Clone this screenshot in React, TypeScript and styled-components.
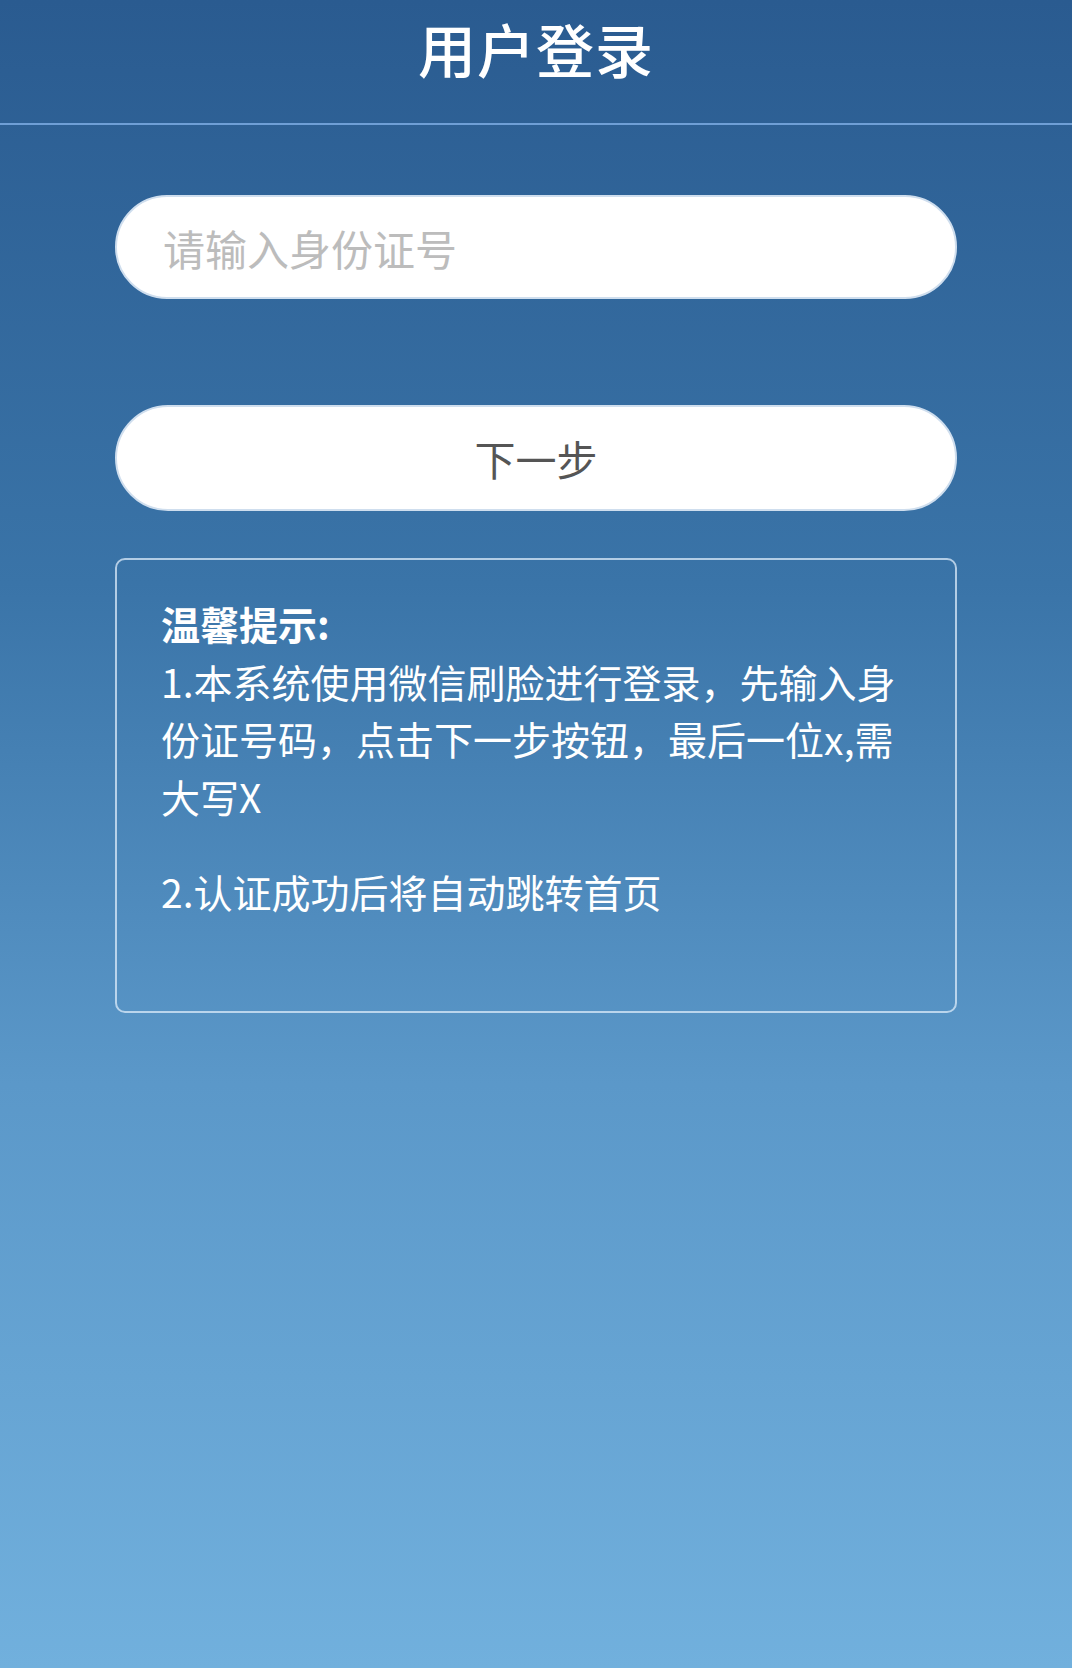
import React from "react";
import styled, { createGlobalStyle } from "styled-components";

const Global = createGlobalStyle`
  html, body { margin: 0; padding: 0; }
  body {
    font-family: "Noto Sans CJK SC", "Noto Sans", sans-serif;
    background: #2a5c91;
  }
  * { box-sizing: border-box; }
`;

const Page = styled.div`
  min-height: 1668px;
  background: linear-gradient(180deg, #2a5b90 0%, #3a74a8 35%, #5b98c9 65%, #71b0dd 100%);
  display: flex;
  flex-direction: column;
`;

const Header = styled.header`
  height: 125px;
  border-bottom: 2px solid #6f9fd6;
  display: flex;
  justify-content: center;
  padding-top: 11px;
`;

const Title = styled.h1`
  margin: 0;
  color: #ffffff;
  font-size: 58px;
  font-weight: 500;
  line-height: 74px;
  letter-spacing: 1px;
`;

const Main = styled.main`
  padding: 70px 115px 0;
  display: flex;
  flex-direction: column;
`;

const Input = styled.input`
  width: 100%;
  height: 104px;
  border-radius: 52px;
  border: 2px solid #cfdeee;
  background: #ffffff;
  padding: 0 46px;
  font-family: inherit;
  font-size: 42px;
  color: #333;
  outline: none;
  &::placeholder { color: #bcbcbc; }
`;

const Button = styled.button`
  margin-top: 106px;
  width: 100%;
  height: 106px;
  border-radius: 53px;
  border: 2px solid #cfdeee;
  background: #ffffff;
  font-family: inherit;
  font-size: 41px;
  color: #555555;
  cursor: pointer;
`;

const Tips = styled.section`
  margin-top: 47px;
  border: 2px solid rgba(220, 235, 250, 0.75);
  border-radius: 10px;
  padding: 35px 42px 52px 44px;
  color: #ffffff;
  font-size: 39px;
  line-height: 57.5px;
`;

const TipsTitle = styled.div`
  font-weight: 700;
`;

const TipItem = styled.p<{ $spaced?: boolean }>`
  margin: ${(p) => (p.$spaced ? "38px 0 38px" : "0")};
`;

export default function App() {
  return (
    <>
      <Global />
      <Page>
        <Header>
          <Title>用户登录</Title>
        </Header>
        <Main>
          <Input placeholder="请输入身份证号" />
          <Button>下一步</Button>
          <Tips>
            <TipsTitle>温馨提示:</TipsTitle>
            <TipItem>1.本系统使用微信刷脸进行登录，先输入身份证号码，点击下一步按钮，最后一位x,需大写X</TipItem>
            <TipItem $spaced>2.认证成功后将自动跳转首页</TipItem>
          </Tips>
        </Main>
      </Page>
    </>
  );
}
